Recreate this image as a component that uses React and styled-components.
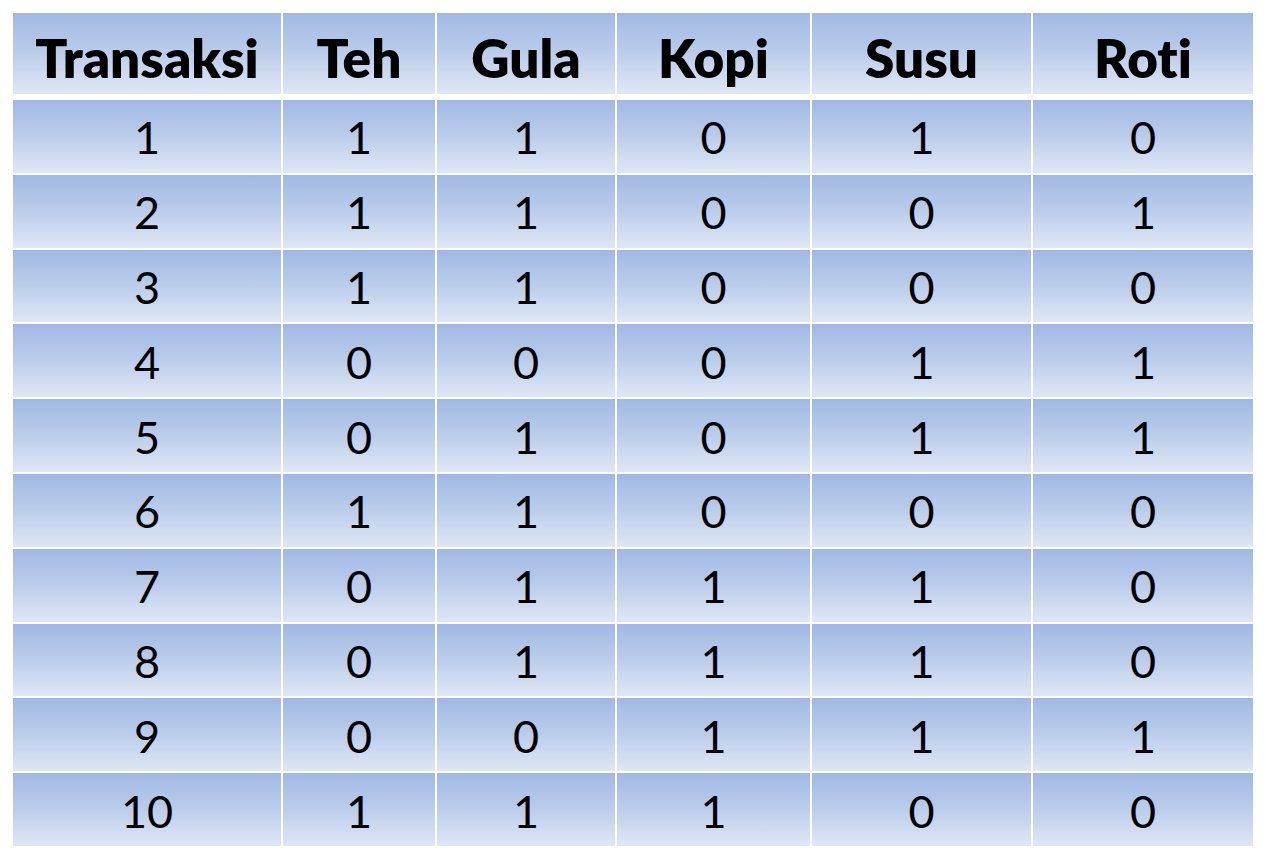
import styled, { createGlobalStyle } from 'styled-components'

const GlobalStyle = createGlobalStyle`
  html, body {
    margin: 0;
    padding: 0;
    background: #ffffff;
  }
  body {
    font-family: Lato, "Open Sans", "Liberation Sans", sans-serif;
    font-variant-ligatures: none;
  }
`

const Page = styled.div`
  width: 1266px;
  height: 859px;
  padding: 13px 0 0 13px;
  box-sizing: border-box;
  background: #ffffff;
`

const Grid = styled.div`
  display: grid;
  grid-template-columns: 268px 152px 178px 193px 219px 220px;
  grid-template-rows: 85px repeat(10, 72.8px);
  column-gap: 2px;
  row-gap: 2px;
  width: 1040px;
`

const Cell = styled.div`
  display: flex;
  align-items: center;
  justify-content: center;
  background: linear-gradient(to bottom, #9fb8e4 0%, #bccdeb 50%, #dfe7f5 100%);
  color: #000000;
  font-size: ${(props) => (props.head ? '53px' : '45px')};
  font-weight: ${(props) => (props.head ? 800 : 400)};
  font-variant-ligatures: none;
  margin-bottom: ${(props) => (props.head ? '4px' : '0')};
  padding-top: ${(props) => (props.head ? '7px' : '2px')};
  box-sizing: border-box;
`

const headers = ['Transaksi', 'Teh', 'Gula', 'Kopi', 'Susu', 'Roti']

const rows = [
  [1, 1, 1, 0, 1, 0],
  [2, 1, 1, 0, 0, 1],
  [3, 1, 1, 0, 0, 0],
  [4, 0, 0, 0, 1, 1],
  [5, 0, 1, 0, 1, 1],
  [6, 1, 1, 0, 0, 0],
  [7, 0, 1, 1, 1, 0],
  [8, 0, 1, 1, 1, 0],
  [9, 0, 0, 1, 1, 1],
  [10, 1, 1, 1, 0, 0],
]

export default function App() {
  return (
    <>
      <GlobalStyle />
      <Page>
        <Grid>
          {headers.map((h) => (
            <Cell head key={h}>{h}</Cell>
          ))}
          {rows.map((row) =>
            row.map((v, i) => <Cell key={row[0] + '-' + i}>{v}</Cell>)
          )}
        </Grid>
      </Page>
    </>
  )
}
